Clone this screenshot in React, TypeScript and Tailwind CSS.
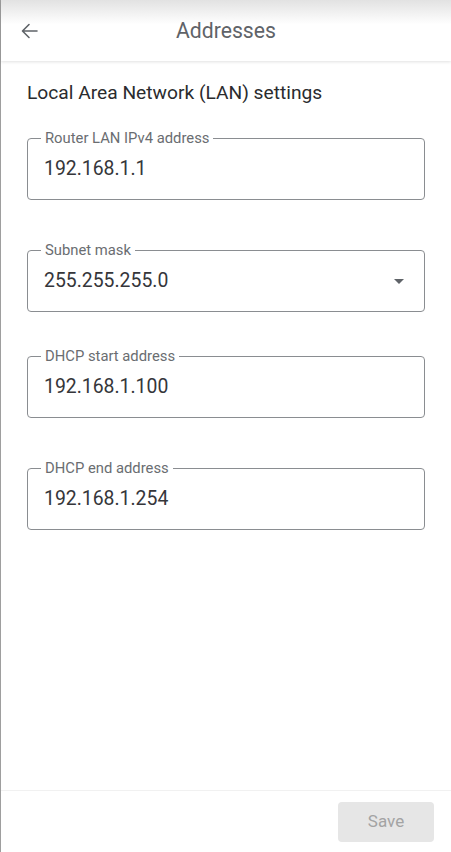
type Field = {
  label: string;
  value: string;
  select?: boolean;
  gap: string;
};

const fields: Field[] = [
  { label: "Router LAN IPv4 address", value: "192.168.1.1", gap: "mt-[25px]" },
  { label: "Subnet mask", value: "255.255.255.0", select: true, gap: "mt-[42px]" },
  { label: "DHCP start address", value: "192.168.1.100", gap: "mt-[36px]" },
  { label: "DHCP end address", value: "192.168.1.254", gap: "mt-[42px]" },
];

function OutlinedField({ field }: { field: Field }) {
  return (
    <fieldset
      className={`${field.gap} rounded-[4px] border border-[#8a8d91] px-[16px] pb-[17px] pt-[9px]`}
    >
      <legend className="-ml-[3px] px-[4px] text-[14.8px] leading-[17px] text-[#6a6d71]">
        {field.label}
      </legend>
      <div className="flex items-center justify-between">
        <span className="text-[19.4px] leading-[26px] text-[#35363a]">{field.value}</span>
        {field.select && (
          <svg width="10" height="5" viewBox="0 0 10 5" className="mr-[4px]">
            <path d="M0 0 L10 0 L5 5 Z" fill="#5f6368" />
          </svg>
        )}
      </div>
    </fieldset>
  );
}

export default function App() {
  return (
    <div
      className="flex h-[852px] w-[451px] flex-col border-l border-[#9e9e9e] bg-white"
      style={{ fontFamily: "Roboto, 'Liberation Sans', sans-serif" }}
    >
      <header className="relative flex h-[61px] shrink-0 items-center bg-gradient-to-b from-[#e2e2e2] via-white via-40% to-white shadow-[0_1px_3px_rgba(0,0,0,0.12)]">
        <button className="ml-[18px] flex h-[20px] w-[20px] items-center justify-center">
          <svg width="17" height="16" viewBox="0 0 17 16" fill="none">
            <path
              d="M16 8 H2 M8 1.5 L1.5 8 L8 14.5"
              stroke="#5f6368"
              strokeWidth="1.6"
              strokeLinecap="round"
              strokeLinejoin="round"
            />
          </svg>
        </button>
        <h1 className="absolute left-0 right-0 text-center text-[21.2px] text-[#5f6368]">
          Addresses
        </h1>
      </header>

      <main className="flex flex-1 flex-col px-[26px] pt-[20px]">
        <h2 className="text-[19.2px] leading-[24px] text-[#2a2b2e]">
          Local Area Network (LAN) settings
        </h2>
        {fields.map((field) => (
          <OutlinedField key={field.label} field={field} />
        ))}
      </main>

      <footer className="flex h-[62px] shrink-0 items-start justify-end border-t border-[#f1f1f1] pr-[17px] pt-[11px]">
        <button
          disabled
          className="h-[40px] w-[96px] rounded-[4px] bg-[#e6e6e6] text-[17px] text-[#a3a3a3]"
        >
          Save
        </button>
      </footer>
    </div>
  );
}
